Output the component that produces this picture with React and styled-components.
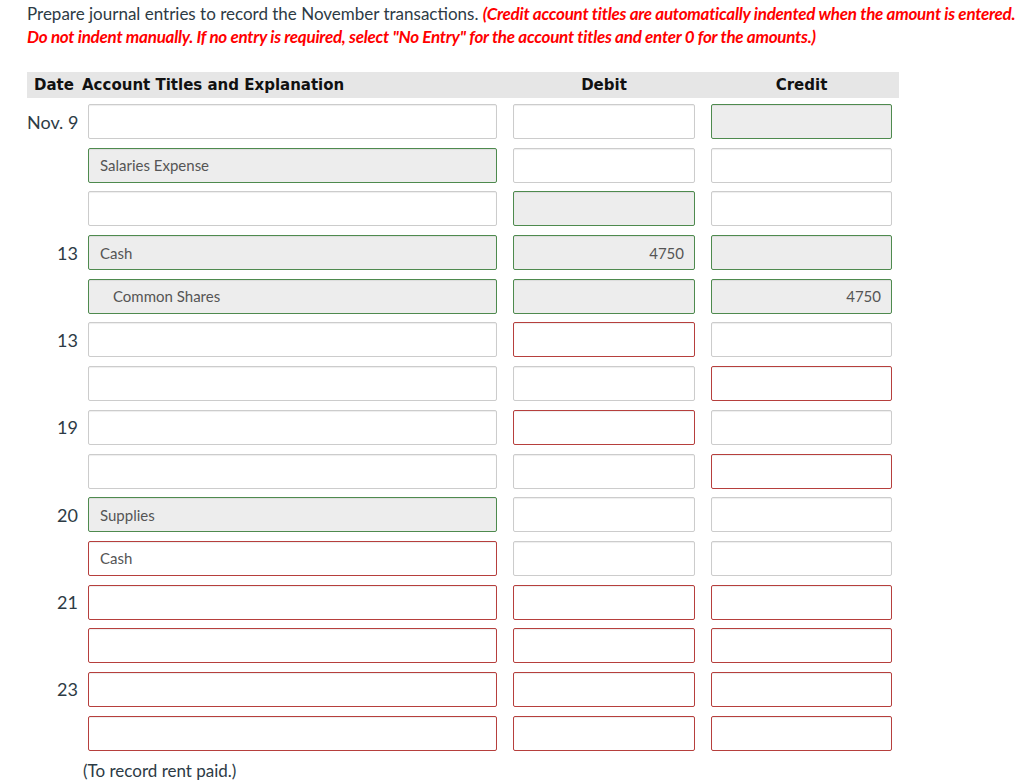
import React from 'react';
import styled, { createGlobalStyle, css } from 'styled-components';

const GlobalStyle = createGlobalStyle`
    html, body {
        margin: 0;
        padding: 0;
        background: #ffffff;
    }
    body {
        font-family: Lato, "Open Sans", "Liberation Sans", sans-serif;
        color: #2d3b45;
    }
`;

const Page = styled.div`
    width: 1024px;
    height: 783px;
    overflow: hidden;
    padding: 2px 0 0 27px;
    box-sizing: border-box;
`;

const Intro = styled.p`
    margin: 0;
    font-size: 17px;
    line-height: 23px;
    color: #2d3b45;
    white-space: nowrap;

    em {
        color: #f00;
        font-weight: 700;
        font-style: italic;
        letter-spacing: -0.25px;
    }
`;

const Table = styled.div`
    margin-top: 24px;
    width: 872px;
`;

const HeaderBar = styled.div`
    display: flex;
    height: 26px;
    align-items: center;
    background: #e6e6e6;
    font-family: "DejaVu Sans", Verdana, sans-serif;
    font-weight: 700;
    font-size: 15px;
    color: #111;
`;

const HeadCell = styled.div`
    width: ${p => p.w}px;
    margin-left: ${p => p.ml || 0}px;
    text-align: ${p => p.align || 'left'};
    white-space: nowrap;
`;

const Rows = styled.div`
    display: flex;
    flex-direction: column;
    gap: 8.7px;
    margin-top: 6px;
`;

const Row = styled.div`
    display: flex;
    align-items: center;
`;

const DateCell = styled.div`
    width: 51px;
    margin-right: 10px;
    text-align: right;
    font-size: 18px;
    color: #2d3b45;
    white-space: nowrap;
`;

const borders = {
    plain: css`
        border-color: #cccccc;
        background: #ffffff;
    `,
    ok: css`
        border-color: #4e8a4e;
        background: #ededed;
    `,
    bad: css`
        border-color: #b63f3d;
        background: #ffffff;
    `,
};

const Field = styled.div`
    width: ${p => p.w}px;
    margin-left: ${p => p.ml || 0}px;
    height: 35px;
    box-sizing: border-box;
    border: 1px solid;
    border-radius: 2px;
    box-shadow: inset 0 1px 1px rgba(0, 0, 0, 0.07);
    display: flex;
    align-items: center;
    justify-content: ${p => (p.num ? 'flex-end' : 'flex-start')};
    padding: 0 10px 0 ${p => (p.indent ? 24 : 11)}px;
    font-size: 15px;
    color: #555;
    white-space: nowrap;
    ${p => borders[p.state || 'plain']}
`;

const Note = styled.div`
    margin: 9px 0 0 56px;
    font-size: 17px;
    color: #2d3b45;
`;

const rows = [
    { date: 'Nov. 9', acc: ['', 'plain'], dr: ['', 'plain'], cr: ['', 'ok'] },
    { acc: ['Salaries Expense', 'ok'], dr: ['', 'plain'], cr: ['', 'plain'] },
    { acc: ['', 'plain'], dr: ['', 'ok'], cr: ['', 'plain'] },
    { date: '13', acc: ['Cash', 'ok'], dr: ['4750', 'ok'], cr: ['', 'ok'] },
    { acc: ['Common Shares', 'ok', true], dr: ['', 'ok'], cr: ['4750', 'ok'] },
    { date: '13', acc: ['', 'plain'], dr: ['', 'bad'], cr: ['', 'plain'] },
    { acc: ['', 'plain'], dr: ['', 'plain'], cr: ['', 'bad'] },
    { date: '19', acc: ['', 'plain'], dr: ['', 'bad'], cr: ['', 'plain'] },
    { acc: ['', 'plain'], dr: ['', 'plain'], cr: ['', 'bad'] },
    { date: '20', acc: ['Supplies', 'ok'], dr: ['', 'plain'], cr: ['', 'plain'] },
    { acc: ['Cash', 'bad'], dr: ['', 'plain'], cr: ['', 'plain'] },
    { date: '21', acc: ['', 'bad'], dr: ['', 'bad'], cr: ['', 'bad'] },
    { acc: ['', 'bad'], dr: ['', 'bad'], cr: ['', 'bad'] },
    { date: '23', acc: ['', 'bad'], dr: ['', 'bad'], cr: ['', 'bad'] },
    { acc: ['', 'bad'], dr: ['', 'bad'], cr: ['', 'bad'] },
];

export default function App() {
    return (
        <>
            <GlobalStyle />
            <Page>
                <Intro>
                    Prepare journal entries to record the November transactions.{' '}
                    <em>(Credit account titles are automatically indented when the amount is entered.</em>
                    <br />
                    <em>Do not indent manually. If no entry is required, select "No Entry" for the account titles and enter 0 for the amounts.)</em>
                </Intro>
                <Table>
                    <HeaderBar>
                        <HeadCell w={48} ml={7}>Date</HeadCell>
                        <HeadCell w={431}>Account Titles and Explanation</HeadCell>
                        <HeadCell w={182} align="center">Debit</HeadCell>
                        <HeadCell w={181} ml={16} align="center">Credit</HeadCell>
                    </HeaderBar>
                    <Rows>
                        {rows.map((r, i) => (
                            <Row key={i}>
                                <DateCell>{r.date || ''}</DateCell>
                                <Field w={409} state={r.acc[1]} indent={r.acc[2]}>{r.acc[0]}</Field>
                                <Field w={182} ml={16} num state={r.dr[1]}>{r.dr[0]}</Field>
                                <Field w={181} ml={16} num state={r.cr[1]}>{r.cr[0]}</Field>
                            </Row>
                        ))}
                    </Rows>
                    <Note>(To record rent paid.)</Note>
                </Table>
            </Page>
        </>
    );
}
